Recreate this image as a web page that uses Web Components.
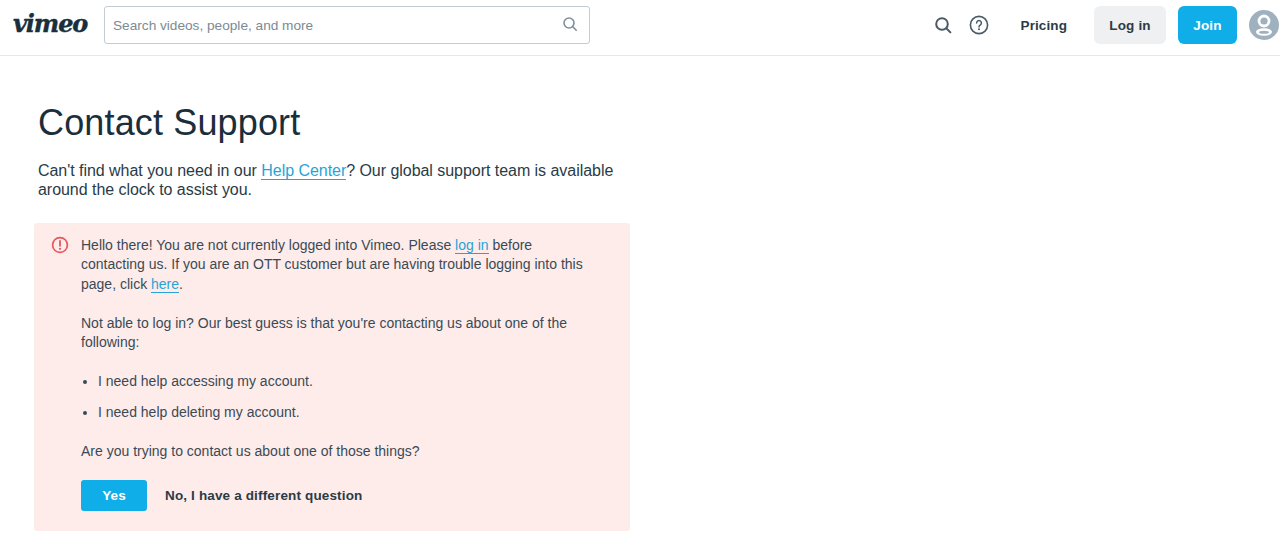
<!DOCTYPE html>
<html lang="en">
<head>
<meta charset="utf-8">
<title>Contact Support</title>
<style>
  html, body { margin: 0; background: #fff; }
  body { font-family: "Liberation Sans", Arial, sans-serif; color: #1a2e3b; }
</style>
</head>
<body>
<site-header></site-header>
<main-content>
  <contact-alert></contact-alert>
</main-content>

<script>
class SiteHeader extends HTMLElement {
  constructor() {
    super();
    this.attachShadow({ mode: "open" });
    this.shadowRoot.innerHTML = `
      <style>
        :host { display: flex; align-items: center; height: 50px; border-bottom: 1px solid #e6e8ea; padding: 0 1px 5px 13px; font-family: "Liberation Sans", Arial, sans-serif; }
        .logo { width: 75px; margin: 0 16px 3px 0; font: italic 700 24px/1 "DejaVu Serif", serif; letter-spacing: -1.1px; color: #1a2e3b; -webkit-text-stroke: .4px #1a2e3b; white-space: nowrap; }
        .search { width: 486px; height: 38px; box-sizing: border-box; border: 1px solid #c4ccd2; border-radius: 3px; display: flex; align-items: center; justify-content: space-between; padding: 0 11px 0 8px; font-size: 13.65px; color: #7c8a94; }
        .search svg { width: 16px; height: 16px; margin-bottom: 3px; }
        .right { margin-left: auto; display: flex; align-items: center; }
        .icon { display: block; }
        .pricing { font-size: 13.5px; font-weight: 700; color: #2a3b47; letter-spacing: .1px; margin: 0 27px 0 32px; }
        .btn { height: 38px; border-radius: 6px; display: flex; align-items: center; justify-content: center; font-size: 13.5px; font-weight: 700; letter-spacing: .15px; box-sizing: border-box; }
        .login { width: 72px; background: #eff0f1; color: #2a3b47; margin-right: 12px; }
        .join { width: 59px; background: #0faee8; color: #fff; margin-right: 12px; }
        .avatar { width: 30px; height: 30px; display: block; }
      </style>
      <div class="logo">vimeo</div>
      <div class="search">
        <span>Search videos, people, and more</span>
        <svg viewBox="0 0 16 16" fill="none" stroke="#7f8f9a" stroke-width="1.6"><circle cx="7" cy="7" r="5"/><path d="M10.8 10.8 14.2 14.2" stroke-linecap="round"/></svg>
      </div>
      <div class="right">
        <svg class="icon" width="18" height="18" viewBox="0 0 18 18" fill="none" stroke="#4a5b67" stroke-width="2" style="margin-right:17px"><circle cx="8" cy="8" r="5.8"/><path d="M12.3 12.3 16.4 16.4" stroke-linecap="round"/></svg>
        <svg class="icon" width="20" height="20" viewBox="0 0 20 20" fill="none"><circle cx="10" cy="10" r="8.6" stroke="#4a5b67" stroke-width="1.6"/><path d="M7.6 8a2.4 2.4 0 1 1 3.6 2.1c-.8.5-1.2.9-1.2 1.8" stroke="#4a5b67" stroke-width="1.5" stroke-linecap="round"/><circle cx="10" cy="14.2" r="1" fill="#4a5b67"/></svg>
        <span class="pricing">Pricing</span>
        <div class="btn login">Log in</div>
        <div class="btn join">Join</div>
        <svg class="avatar" viewBox="0 0 30 30"><circle cx="15" cy="15" r="15" fill="#9fb0bf"/><circle cx="15" cy="11" r="5" fill="none" stroke="#fff" stroke-width="2.8"/><ellipse cx="15" cy="22" rx="8" ry="3.8" fill="#fff"/><ellipse cx="15" cy="22.2" rx="5" ry="1.5" fill="#9fb0bf"/></svg>
      </div>
    `;
  }
}

class MainContent extends HTMLElement {
  constructor() {
    super();
    this.attachShadow({ mode: "open" });
    this.shadowRoot.innerHTML = `
      <style>
        :host { display: block; width: 596px; padding: 45px 0 0 34px; font-family: "Liberation Sans", Arial, sans-serif; }
        h1 { margin: 0 0 17px 4px; font-size: 36px; line-height: 43px; font-weight: 400; color: #1a2e3b; letter-spacing: .15px; }
        p { margin: 0 0 24px 4px; width: 580px; font-size: 16px; line-height: 19px; color: #2a3b47; letter-spacing: -.04px; }
        a { color: #27a4d6; text-decoration: none; border-bottom: 1px solid #27a4d6; }
      </style>
      <h1>Contact Support</h1>
      <p>Can't find what you need in our <a>Help Center</a>? Our global support team is available<br>around the clock to assist you.</p>
      <slot></slot>
    `;
  }
}

class ContactAlert extends HTMLElement {
  constructor() {
    super();
    this.attachShadow({ mode: "open" });
    this.shadowRoot.innerHTML = `
      <style>
        :host { display: flex; height: 308px; box-sizing: border-box; background: #feecea; border-radius: 3px; padding: 12.6px 40px 0 17px; font-size: 14px; line-height: 19.5px; color: #3a4a55; font-family: "Liberation Sans", Arial, sans-serif; }
        svg.warn { width: 18px; height: 18px; flex: none; margin: 0 12px 0 0; }
        .body { flex: 1; }
        p { margin: 0 0 19.5px; }
        p.ask { margin-bottom: 18.5px; }
        ul { margin: 0 0 19.5px; padding: 0 0 0 17px; }
        li { margin-bottom: 11.5px; }
        li:last-child { margin-bottom: 0; }
        a { color: #27a4d6; text-decoration: none; border-bottom: 1px solid #27a4d6; }
        .actions { display: flex; align-items: center; }
        .yes { width: 66px; height: 31px; background: #0faee8; color: #fff; border-radius: 3px; display: flex; align-items: center; justify-content: center; font-weight: 700; font-size: 13.5px; letter-spacing: .15px; }
        .no { margin-left: 18px; font-weight: 700; font-size: 13.5px; color: #2a3b47; letter-spacing: .15px; white-space: nowrap; }
      </style>
      <svg class="warn" viewBox="0 0 18 18" fill="none"><circle cx="9" cy="9" r="7.4" stroke="#e8555a" stroke-width="1.7"/><path d="M9 4.8v5" stroke="#e8555a" stroke-width="1.8" stroke-linecap="round"/><circle cx="9" cy="12.8" r="1.1" fill="#e8555a"/></svg>
      <div class="body">
        <p>Hello there! You are not currently logged into Vimeo. Please <a>log in</a> before<br>contacting us. If you are an OTT customer but are having trouble logging into this<br>page, click <a>here</a>.</p>
        <p>Not able to log in? Our best guess is that you're contacting us about one of the following:</p>
        <ul>
          <li>I need help accessing my account.</li>
          <li>I need help deleting my account.</li>
        </ul>
        <p class="ask">Are you trying to contact us about one of those things?</p>
        <div class="actions"><div class="yes">Yes</div><div class="no">No, I have a different question</div></div>
      </div>
    `;
  }
}

customElements.define("site-header", SiteHeader);
customElements.define("main-content", MainContent);
customElements.define("contact-alert", ContactAlert);
</script>
</body>
</html>
